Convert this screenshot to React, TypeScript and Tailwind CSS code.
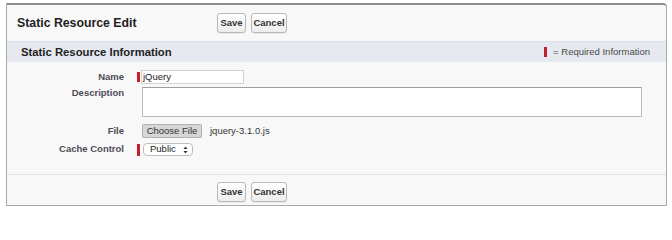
import React from "react";

function Btn({ label, w }: { label: string; w: string }) {
  return (
    <button
      className={`${w} h-[20px] rounded-[3px] border border-[#b8b8b8] bg-gradient-to-b from-white to-[#ededed] text-[9.5px] font-bold text-[#333] leading-none flex items-center justify-center shadow-[0_1px_0_rgba(0,0,0,0.06)]`}
    >
      {label}
    </button>
  );
}

function ReqBar({ h }: { h: string }) {
  return <div className={`w-[3px] ${h} bg-[#c2202c] shrink-0`} />;
}

export default function App() {
  return (
    <div className="w-[672px] h-[208px] bg-white pt-[3px] pl-[6px] font-['Liberation_Sans',Arial,sans-serif]">
      <div className="w-[661px] h-[203px] border border-[#a9a9a9] border-t-2 border-t-[#8f8f8f] rounded-tr-[4px] bg-[#f8f8f8] flex flex-col">
        {/* title row */}
        <div className="h-[36px] flex items-center pl-[10px]">
          <div className="w-[200px] text-[12.3px] font-bold text-[#222]">Static Resource Edit</div>
          <div className="flex gap-[5px]">
            <Btn label="Save" w="w-[29px]" />
            <Btn label="Cancel" w="w-[36px]" />
          </div>
        </div>
        {/* section header */}
        <div className="h-[21px] border-t border-[#dcdfe5] bg-[#e6e9ef] flex items-center pl-[14px] pr-[16px]">
          <div className="text-[11.3px] font-bold text-[#222] flex-1">Static Resource Information</div>
          <div className="flex items-center">
            <ReqBar h="h-[10px]" />
            <span className="ml-[6px] text-[9.5px] text-[#4a4a4a]">= Required Information</span>
          </div>
        </div>
        {/* form */}
        <div className="grid grid-cols-[117px_1fr] gap-x-[13px] text-[9.5px] mt-[8px]">
          <div className="h-[14px] flex items-center justify-end font-bold text-[#4d4d55]">Name</div>
          <div className="h-[14px] flex items-center">
            <ReqBar h="h-[10px]" />
            <div className="ml-[1px] w-[103px] h-[14px] bg-white border border-[#d2d2d2] flex items-center pl-[1px] text-[#222]">
              jQuery
            </div>
          </div>

          <div className="mt-[3px] h-[12px] flex items-center justify-end font-bold text-[#4d4d55]">Description</div>
          <div className="mt-[3px] pl-[5px]">
            <div className="w-[500px] h-[30px] bg-white border border-[#b9b9b9] border-t-[#9e9e9e]" />
          </div>

          <div className="mt-[7px] h-[14px] flex items-center justify-end font-bold text-[#4d4d55]">File</div>
          <div className="mt-[7px] h-[14px] pl-[5px] flex items-center">
            <div className="w-[60px] h-[14px] bg-[#d6d6d6] border border-[#b0b0b0] rounded-[2px] flex items-center justify-center text-[#333]">
              Choose File
            </div>
            <span className="ml-[8px] text-[#333]">jquery-3.1.0.js</span>
          </div>

          <div className="mt-[5px] h-[13px] flex items-center justify-end font-bold text-[#4d4d55]">Cache Control</div>
          <div className="mt-[5px] h-[13px] flex items-center">
            <ReqBar h="h-[12px]" />
            <div className="ml-[3px] w-[50px] h-[13px] bg-white border border-[#bdbdbd] rounded-[4px] flex items-center pl-[6px] pr-[4px] text-[#222]">
              <span className="flex-1">Public</span>
              <svg width="5" height="8" viewBox="0 0 5 8">
                <path d="M2.5 0.5 L4.5 3 L0.5 3 Z" fill="#333" />
                <path d="M2.5 7.5 L4.5 5 L0.5 5 Z" fill="#333" />
              </svg>
            </div>
          </div>
        </div>
        <div className="flex-1" />
        {/* footer */}
        <div className="h-[31px] border-t border-[#e2e2e2] flex items-start pt-[7px] pl-[210px]">
          <div className="flex gap-[5px]">
            <Btn label="Save" w="w-[29px]" />
            <Btn label="Cancel" w="w-[36px]" />
          </div>
        </div>
      </div>
    </div>
  );
}
